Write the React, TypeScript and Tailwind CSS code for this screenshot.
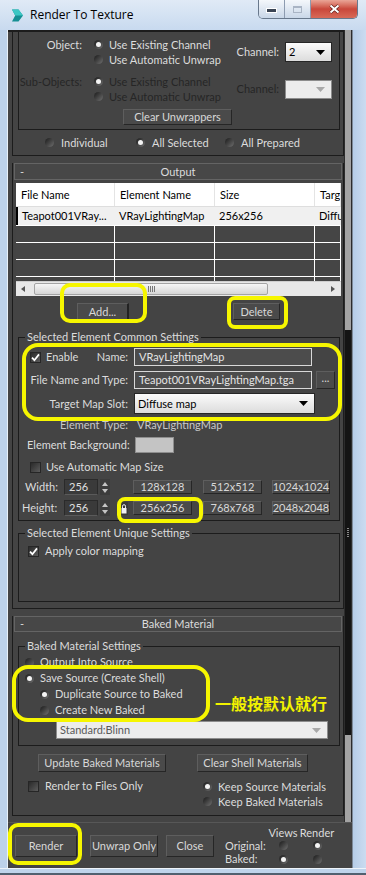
import React from 'react';

type Kid = { children?: React.ReactNode; className?: string };

const Radio = ({ on = false }: { on?: boolean }) => (
  <span className="w-[9px] h-[9px] shrink-0 rounded-full bg-linear-to-br from-[#1c1c1c] to-[#707070] flex items-center justify-center">
    {on && <span className="w-[5px] h-[5px] rounded-full bg-[#f4f4f4]" />}
  </span>
);

const Check = ({ on = false }: { on?: boolean }) => (
  <span className="w-[11px] h-[11px] shrink-0 border border-[#262626] bg-linear-to-br from-[#2a2a2a] to-[#5c5c5c] flex items-center justify-center">
    {on && (
      <svg width="9" height="9" viewBox="0 0 9 9">
        <path d="M1 4.6 3.4 7.2 8 1.4" stroke="#fff" strokeWidth="1.7" fill="none" />
      </svg>
    )}
  </span>
);

const Btn = ({ children, className = '' }: Kid) => (
  <div
    className={`flex items-center justify-center shrink-0 bg-[#4a4a4a] border border-[#262626] border-t-[#5e5e5e] border-l-[#5e5e5e] text-[#d8d8d8] ${className}`}
  >
    {children}
  </div>
);

const Drop = ({ text, className = '', dim = false }: { text: string; className?: string; dim?: boolean }) => (
  <div
    className={`flex items-center shrink-0 border ${
      dim ? 'border-[#8c8c8c] bg-[#ececec] text-[#5a5a5a]' : 'border-[#262626] bg-linear-to-b from-[#fbfbfb] to-[#dcdcdc] text-black'
    } ${className}`}
  >
    <span className="pl-[3px] flex-1">{text}</span>
    <svg width="9" height="5" viewBox="0 0 9 5" className="mr-[6px]">
      <path d="M0 0h9L4.5 5z" fill={dim ? '#a8a8a8' : '#000'} />
    </svg>
  </div>
);

const Field = ({ text, className = '' }: { text: string; className?: string }) => (
  <div className={`flex items-center shrink-0 border border-[#d8d8d8] bg-[#4c4c4c] text-[#e4e4e4] pl-[4px] ${className}`}>
    {text}
  </div>
);

const Spin = () => (
  <div className="w-[10px] h-[16px] ml-[2px] flex flex-col items-center justify-center gap-[3px] bg-[#3c3c3c]">
    <svg width="6" height="4" viewBox="0 0 6 4">
      <path d="M0 4 3 0 6 4z" fill="#c4c4c4" />
    </svg>
    <svg width="6" height="4" viewBox="0 0 6 4">
      <path d="M0 0h6L3 4z" fill="#c4c4c4" />
    </svg>
  </div>
);

const NumField = ({ text }: { text: string }) => (
  <div className="w-[34px] h-[16px] flex items-center pl-[4px] bg-[#3a3a3a] border border-[#2a2a2a] border-b-[#5a5a5a] text-[#e0e0e0]">
    {text}
  </div>
);

const Header = ({ title, h }: { title: string; h: string }) => (
  <div className={`mx-[1px] ${h} border border-[#646464] bg-[#474747] flex items-center`}>
    <span className="w-[14px] pl-[5px]">-</span>
    <span className="flex-1 text-center">{title}</span>
    <span className="w-[14px]" />
  </div>
);

const Ring = ({ className }: { className: string }) => (
  <div className={`absolute border-[4px] border-[#f6f600] ${className}`} />
);

const MaxLogo = () => (
  <svg width="13" height="15" viewBox="0 0 13 15">
    <path d="M1 1.5h6.5L12 7.5 7.5 13.5H1l3.2-6z" fill="#168f93" />
    <path d="M4.2 7.5 1 1.5h6.5L12 7.5z" fill="#3cc7c4" />
  </svg>
);

const cols = ['w-[99px]', 'w-[100px]', 'w-[100px]', 'w-[26px]'];

export default function App() {
  return (
    <div className="relative w-[366px] h-[875px] overflow-hidden bg-[#c1d5ec] font-[Lato,sans-serif] text-[11px] leading-[14px] text-[#dcdcdc] flex flex-col">
      {/* title bar */}
      <div className="h-[30px] shrink-0 flex items-start bg-linear-to-b from-[#e0eaf6] to-[#c8daef]">
        <div className="h-[30px] flex items-center pl-[11px] gap-[6px]">
          <MaxLogo />
          <span className="font-['Open_Sans',sans-serif] text-[12px] text-black">Render To Texture</span>
        </div>
        <div className="ml-auto mr-[8px] flex h-[19px] rounded-b-[5px] border border-t-0 border-[#68788c] overflow-hidden">
          <div className="w-[26px] flex items-end justify-center pb-[5px] bg-linear-to-b from-[#f4f7fb] to-[#c9d7e8] border-r border-[#8d9bb0]">
            <span className="w-[9px] h-[3px] bg-[#3a4454] border border-white box-content" />
          </div>
          <div className="w-[26px] flex items-center justify-center bg-linear-to-b from-[#f4f7fb] to-[#c9d7e8] border-r border-[#8d9bb0]">
            <span className="w-[9px] h-[7px] border border-[#a9b4c4] border-t-2" />
          </div>
          <div className="w-[46px] flex items-center justify-center bg-linear-to-b from-[#e9a597] via-[#c9473b] to-[#d86a58]">
            <svg width="11" height="10" viewBox="0 0 11 10">
              <path d="M1.5 1.5 9.5 8.5M9.5 1.5 1.5 8.5" stroke="#5a1a14" strokeWidth="3.2" />
              <path d="M1.5 1.5 9.5 8.5M9.5 1.5 1.5 8.5" stroke="#fff" strokeWidth="2" />
            </svg>
          </div>
        </div>
      </div>

      {/* body */}
      <div className="h-[838px] shrink-0 flex">
        <div className="w-[8px] border-r border-[#e8f0f8] bg-[#bdd2ea]" />
        <div className="w-[344px] bg-[#444444] flex flex-col">
          <div className="h-[792px] shrink-0 flex">
            <div className="w-[336px] border-t-2 border-[#1c1c1c] flex flex-col">
              {/* rollout: mapping coords (scrolled) */}
              <div className="ml-[4px] w-[332px] border-x border-b border-[#1c1c1c] flex flex-col">
                <div className="ml-[5px] w-[322px] h-[98px] border-x border-b border-[#1c1c1c] pt-[5px] flex flex-col">
                  <div className="flex h-[30px]">
                    <div className="w-[63px] text-right leading-[15px]">Object:</div>
                    <div className="ml-[12px] flex flex-col">
                      <div className="h-[15px] flex items-center gap-[6px]">
                        <Radio on />
                        <span>Use Existing Channel</span>
                      </div>
                      <div className="h-[15px] flex items-center gap-[6px]">
                        <Radio />
                        <span>Use Automatic Unwrap</span>
                      </div>
                    </div>
                    <div className="ml-auto mr-[7px] flex items-center gap-[6px]">
                      <span>Channel:</span>
                      <Drop text="2" className="w-[47px] h-[20px]" />
                    </div>
                  </div>
                  <div className="mt-[7px] flex h-[30px] text-[#262626]">
                    <div className="w-[63px] text-right leading-[15px]">Sub-Objects:</div>
                    <div className="ml-[12px] flex flex-col">
                      <div className="h-[15px] flex items-center gap-[6px]">
                        <Radio on />
                        <span>Use Existing Channel</span>
                      </div>
                      <div className="h-[15px] flex items-center gap-[6px]">
                        <Radio />
                        <span>Use Automatic Unwrap</span>
                      </div>
                    </div>
                    <div className="ml-auto mr-[7px] flex items-center gap-[6px]">
                      <span>Channel:</span>
                      <Drop text="" dim className="w-[47px] h-[19px]" />
                    </div>
                  </div>
                  <Btn className="mt-[5px] ml-[104px] w-[109px] h-[16px]">Clear Unwrappers</Btn>
                </div>
                <div className="h-[25px] flex items-center pl-[32px]">
                  <div className="w-[91px] flex items-center gap-[7px]">
                    <Radio />
                    <span>Individual</span>
                  </div>
                  <div className="w-[89px] flex items-center gap-[7px]">
                    <Radio on />
                    <span>All Selected</span>
                  </div>
                  <div className="flex items-center gap-[7px]">
                    <Radio />
                    <span>All Prepared</span>
                  </div>
                </div>
              </div>

              {/* rollout: Output */}
              <div className="mt-[7px] ml-[4px] w-[332px] border-x border-b border-[#1c1c1c] pb-[6px] flex flex-col">
                <Header title="Output" h="h-[17px]" />
                <div className="mt-[3px] ml-[3px] w-[325px] h-[113px] flex flex-col bg-[#454545] overflow-hidden text-black">
                  <div className="h-[24px] shrink-0 flex bg-white border-b border-[#dedede]">
                    {['File Name', 'Element Name', 'Size', 'Target'].map((t, i) => (
                      <div key={t} className={`${cols[i]} shrink-0 overflow-hidden whitespace-nowrap border-r border-[#e4e4e4] pl-[5px] flex items-center`}>
                        {t}
                      </div>
                    ))}
                  </div>
                  <div className="h-[18px] shrink-0 flex bg-[#f0f0f0]">
                    {['Teapot001VRay...', 'VRayLightingMap', '256x256', 'Diffuse map'].map((t, i) => (
                      <div
                        key={t}
                        className={`${cols[i]} shrink-0 overflow-hidden whitespace-nowrap pl-[4px] flex items-center ${i === 0 ? 'border-l-2 border-black' : ''}`}
                      >
                        {t}
                      </div>
                    ))}
                  </div>
                  {['h-[17px]', 'h-[17px]', 'h-[17px]', 'h-[5px]'].map((h, r) => (
                    <div key={r} className={`${h} shrink-0 flex border-t border-white`}>
                      {cols.map((c, i) => (
                        <div key={i} className={`${c} shrink-0 border-r border-white`} />
                      ))}
                    </div>
                  ))}
                  <div className="h-[15px] shrink-0 flex items-center bg-[#e8e8e8] border-t border-[#cfcfcf]">
                    <svg width="4" height="6" viewBox="0 0 4 6" className="ml-[5px]">
                      <path d="M4 0v6L0 3z" fill="#555" />
                    </svg>
                    <div className="ml-[9px] w-[234px] h-[12px] rounded-[2px] border border-[#a4a4a4] bg-linear-to-b from-[#f6f6f6] to-[#d6d6d6] flex items-center justify-center gap-[1px]">
                      <span className="w-[1px] h-[6px] bg-[#777]" />
                      <span className="w-[1px] h-[6px] bg-[#777]" />
                      <span className="w-[1px] h-[6px] bg-[#777]" />
                      <span className="w-[1px] h-[6px] bg-[#777]" />
                    </div>
                    <svg width="4" height="6" viewBox="0 0 4 6" className="ml-auto mr-[6px]">
                      <path d="M0 0v6L4 3z" fill="#555" />
                    </svg>
                  </div>
                </div>
                <div className="mt-[7px] h-[17px] flex">
                  <Btn className="ml-[64px] w-[52px] h-[17px] border-r-2 border-r-[#222]">Add...</Btn>
                  <Btn className="ml-[104px] w-[47px] h-[17px]">Delete</Btn>
                </div>

                <fieldset className="mt-[10px] ml-[5px] w-[322px] border border-[#1c1c1c] pb-[4px]">
                  <legend className="ml-[6px] px-[2px] leading-[14px]">Selected Element Common Settings</legend>
                  <div className="mt-[4px] h-[18px] flex items-center">
                    <div className="w-[109px] flex items-center pl-[11px]">
                      <Check on />
                      <span className="ml-[5px]">Enable</span>
                      <span className="ml-auto">Name:</span>
                    </div>
                    <Field text="VRayLightingMap" className="ml-[6px] w-[178px] h-[18px]" />
                  </div>
                  <div className="mt-[5px] h-[18px] flex items-center">
                    <div className="w-[109px] text-right whitespace-nowrap">File Name and Type:</div>
                    <Field text="Teapot001VRayLightingMap.tga" className="ml-[6px] w-[178px] h-[18px]" />
                    <Btn className="ml-[4px] w-[19px] h-[18px] pb-[4px]">...</Btn>
                  </div>
                  <div className="mt-[4px] h-[21px] flex items-center">
                    <div className="w-[109px] text-right">Target Map Slot:</div>
                    <Drop text="Diffuse map" className="ml-[6px] w-[181px] h-[21px]" />
                  </div>
                  <div className="mt-[4px] h-[14px] flex items-center text-[#c8c8c8]">
                    <div className="w-[109px] text-right">Element Type:</div>
                    <span className="ml-[9px]">VRayLightingMap</span>
                  </div>
                  <div className="mt-[5px] h-[16px] flex items-center">
                    <div className="w-[109px] pl-[8px] whitespace-nowrap">Element Background:</div>
                    <span className="ml-[7px] w-[39px] h-[16px] bg-[#c4c4c4] border border-[#8e8e8e]" />
                  </div>
                  <div className="mt-[7px] h-[14px] flex items-center pl-[11px]">
                    <Check />
                    <span className="ml-[5px]">Use Automatic Map Size</span>
                  </div>
                  <div className="mt-[5px] h-[16px] flex items-center">
                    <div className="w-[45px] pl-[6px]">Width:</div>
                    <NumField text="256" />
                    <Spin />
                    <Btn className="ml-[23px] w-[59px] h-[14px]">128x128</Btn>
                    <Btn className="ml-[11px] w-[59px] h-[14px]">512x512</Btn>
                    <Btn className="ml-[10px] w-[58px] h-[14px]">1024x1024</Btn>
                  </div>
                  <div className="mt-[5px] h-[16px] flex items-center">
                    <div className="w-[45px] pl-[3px]">Height:</div>
                    <NumField text="256" />
                    <Spin />
                    <div className="ml-[9px] w-[9px] h-[13px] bg-[#3a3a3a] flex items-end justify-center pb-[1px]">
                      <svg width="6" height="10" viewBox="0 0 6 10">
                        <path d="M1.5 4V2.2a1.5 1.5 0 0 1 3 0V4" stroke="#eee" strokeWidth="1" fill="none" />
                        <rect x="0.5" y="4" width="5" height="5.5" fill="#f2f2f2" />
                      </svg>
                    </div>
                    <Btn className="ml-[5px] w-[59px] h-[14px]">256x256</Btn>
                    <Btn className="ml-[11px] w-[59px] h-[14px]">768x768</Btn>
                    <Btn className="ml-[10px] w-[58px] h-[14px]">2048x2048</Btn>
                  </div>
                </fieldset>

                <fieldset className="mt-[5px] ml-[5px] w-[322px] h-[76px] border border-[#1c1c1c]">
                  <legend className="ml-[6px] px-[2px] leading-[14px]">Selected Element Unique Settings</legend>
                  <div className="mt-[4px] h-[14px] flex items-center pl-[9px]">
                    <Check on />
                    <span className="ml-[6px]">Apply color mapping</span>
                  </div>
                </fieldset>
              </div>

              {/* rollout: Baked Material */}
              <div className="mt-[7px] ml-[4px] w-[332px] border-x border-b border-[#1c1c1c] pb-[6px] flex flex-col">
                <Header title="Baked Material" h="h-[16px]" />
                <fieldset className="mt-[7px] ml-[5px] w-[322px] border border-[#1c1c1c] pb-[6px]">
                  <legend className="ml-[6px] px-[2px] leading-[14px]">Baked Material Settings</legend>
                  <div className="mt-[2px] h-[14px] flex items-center pl-[6px] gap-[6px]">
                    <Radio />
                    <span>Output Into Source</span>
                  </div>
                  <div className="mt-[2px] h-[14px] flex items-center pl-[6px] gap-[6px]">
                    <Radio on />
                    <span>Save Source (Create Shell)</span>
                  </div>
                  <div className="mt-[2px] h-[14px] flex items-center pl-[21px] gap-[6px]">
                    <Radio on />
                    <span>Duplicate Source to Baked</span>
                  </div>
                  <div className="mt-[2px] h-[14px] flex items-center pl-[21px] gap-[6px]">
                    <Radio />
                    <span>Create New Baked</span>
                  </div>
                  <Drop text="Standard:Blinn" dim className="mt-[4px] ml-[37px] w-[272px] h-[18px]" />
                </fieldset>
                <div className="mt-[8px] h-[18px] flex">
                  <Btn className="ml-[25px] w-[128px] h-[18px]">Update Baked Materials</Btn>
                  <Btn className="ml-[31px] w-[111px] h-[18px]">Clear Shell Materials</Btn>
                </div>
                <div className="mt-[7px] flex">
                  <div className="w-[190px] h-[14px] flex items-center pl-[15px]">
                    <Check />
                    <span className="ml-[6px]">Render to Files Only</span>
                  </div>
                  <div className="flex flex-col">
                    <div className="h-[15px] flex items-center gap-[6px]">
                      <Radio on />
                      <span>Keep Source Materials</span>
                    </div>
                    <div className="h-[15px] flex items-center gap-[6px]">
                      <Radio />
                      <span>Keep Baked Materials</span>
                    </div>
                  </div>
                </div>
              </div>
            </div>

            {/* rollout scroll bar */}
            <div className="w-[8px] flex flex-col bg-[#a3a3a3] border-x border-[#2c2c2c]">
              <div className="h-[300px] shrink-0" />
              <div className="h-[405px] shrink-0 bg-[#141414] flex flex-col items-center justify-center gap-[1px]">
                {[0, 1, 2, 3, 4].map((k) => (
                  <span key={k} className="w-[2px] h-[1px] bg-[#8a8a8a]" />
                ))}
              </div>
            </div>
          </div>

          {/* bottom buttons */}
          <div className="h-[46px] shrink-0 border-t border-[#575757] flex items-start">
            <Btn className="mt-[12px] ml-[7px] w-[62px] h-[22px]">Render</Btn>
            <Btn className="mt-[12px] ml-[13px] w-[68px] h-[22px]">Unwrap Only</Btn>
            <Btn className="mt-[12px] ml-[8px] w-[48px] h-[22px]">Close</Btn>
            <div className="mt-[3px] ml-[11px] grid grid-cols-[43px_30px_38px] grid-rows-[13px_13px_14px] leading-[13px]">
              <span />
              <span className="text-center">Views</span>
              <span className="text-center">Render</span>
              <span>Original:</span>
              <span className="flex items-center justify-center">
                <Radio />
              </span>
              <span className="flex items-center justify-center">
                <Radio on />
              </span>
              <span>Baked:</span>
              <span className="flex items-center justify-center">
                <Radio on />
              </span>
              <span className="flex items-center justify-center">
                <Radio />
              </span>
            </div>
          </div>
        </div>
        <div className="w-[14px] border-l border-[#7d8a99] bg-linear-to-r from-[#b6cde8] to-[#cbdcf0]" />
      </div>
      <div className="h-[7px] shrink-0 border-t border-[#eef4fa] bg-[#bfd4eb] border-b-2 border-b-[#51606f]" />

      {/* yellow annotations */}
      <Ring className="left-[60px] top-[283px] w-[87px] h-[40px] rounded-[10px]" />
      <Ring className="left-[227px] top-[296px] w-[61px] h-[33px] rounded-[8px]" />
      <Ring className="left-[22px] top-[343px] w-[320px] h-[78px] rounded-[16px]" />
      <Ring className="left-[117px] top-[497px] w-[86px] h-[26px] rounded-[8px]" />
      <Ring className="left-[12px] top-[665px] w-[198px] h-[57px] rounded-[16px]" />
      <Ring className="left-[8px] top-[823px] w-[74px] h-[42px] rounded-[10px]" />
      <div className="absolute left-[215px] top-[694px] text-[16px] leading-[18px] font-bold text-[#f2f200] font-['Noto_Sans_CJK_SC',sans-serif]">
        一般按默认就行
      </div>
    </div>
  );
}
